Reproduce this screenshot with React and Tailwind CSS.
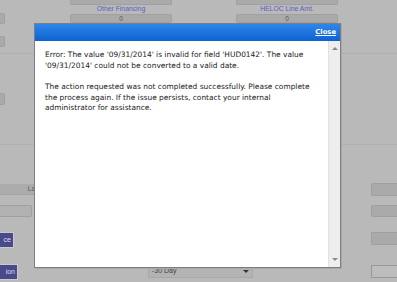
import React from "react"

const Box = ({ className = "", children }) => (
    <div className={`bg-[#aaaaaa] border border-[#a0a0a0] rounded-[2px] flex items-center justify-center text-[6.5px] text-[#555] ${className}`}>
        {children}
    </div>
)

const ErrorDialog = () => {
    return (
        <div className="absolute left-[34px] top-[23px] w-[307px] h-[245px] border border-[#7e7e7e] bg-white flex flex-col shadow-[1px_1px_0_#a9a9a9]">
            <div className="h-[17px] bg-gradient-to-b from-[#2f86ea] to-[#0b62d2] flex items-center justify-end pr-[4px]">
                <a className="text-white font-bold underline text-[6.8px] font-['DejaVu_Sans',sans-serif] cursor-pointer">Close</a>
            </div>
            <div className="flex-1 flex min-h-0">
                <div className="flex-1 pl-[10px] pr-[7px] pt-[9px] text-[7.45px] leading-[10.5px] text-[#222] font-['DejaVu_Sans',sans-serif]">
                    <p>Error: The value '09/31/2014' is invalid for field 'HUD0142'. The value '09/31/2014' could not be converted to a valid date.</p>
                    <p className="mt-[11px]">The action requested was not completed successfully. Please complete the process again. If the issue persists, contact your internal administrator for assistance.</p>
                </div>
                <div className="w-[12px] bg-[#eeeeee] border-l border-[#e2e2e2] flex flex-col items-center justify-between py-[6px]">
                    <div className="w-0 h-0 border-l-[3px] border-r-[3px] border-b-[3px] border-l-transparent border-r-transparent border-b-[#8a8a8a]" />
                    <div className="w-0 h-0 border-l-[3px] border-r-[3px] border-t-[3px] border-l-transparent border-r-transparent border-t-[#8a8a8a]" />
                </div>
            </div>
        </div>
    )
}

const App = () => {
    return (
        <div className="relative w-[397px] h-[282px] overflow-hidden bg-[#b9b9b9] font-['Liberation_Sans',sans-serif]">
            {/* greyed page underneath */}
            <div className="flex flex-col">
                <div className="flex h-[5px]">
                    <div className="w-[70px]" />
                    <Box className="w-[102px] h-[5px] border-t-0 rounded-t-none" />
                    <div className="w-[64px]" />
                    <Box className="w-[102px] h-[5px] border-t-0 rounded-t-none" />
                </div>
                <div className="flex h-[8px] items-center text-[6.8px] text-[#5d5dc2]">
                    <div className="w-[70px]" />
                    <div className="w-[102px] text-center">Other Financing</div>
                    <div className="w-[64px]" />
                    <div className="w-[102px] text-center">HELOC Line Amt.</div>
                </div>
                <div className="flex h-[11px] items-start">
                    <Box className="w-[5px] h-[11px] border-l-0 rounded-l-none" />
                    <div className="w-[65px]" />
                    <Box className="w-[102px] h-[9px] mt-[1px]">0</Box>
                    <div className="w-[64px]" />
                    <Box className="w-[102px] h-[9px] mt-[1px]">0</Box>
                </div>
                <Box className="w-[5px] h-[11px] mt-[12px] border-l-0 rounded-l-none" />
                <div className="h-px bg-[#b0b0b0] mt-[6px]" />
                <Box className="w-[5px] h-[12px] mt-[39px] border-l-0 rounded-l-none" />
                <div className="h-px bg-[#b0b0b0] mt-[39px]" />
                <div className="flex justify-between items-start mt-[38px] h-[13px]">
                    <div className="w-[35px] h-[11px] mt-[1px] bg-[#acacac] border-b border-[#a3a3a3] flex items-center justify-end text-[6.5px] text-[#555]">La</div>
                    <Box className="w-[26px] h-[13px] border-r-0 rounded-r-none" />
                </div>
                <div className="flex justify-between items-start mt-[9px] h-[12px]">
                    <Box className="w-[32px] h-[12px] border-l-0 rounded-l-none bg-[#b1b1b1]" />
                    <Box className="w-[26px] h-[12px] border-r-0 rounded-r-none" />
                </div>
                <div className="flex justify-between items-start mt-[15px] h-[16px]">
                    <div className="w-[14px] h-[16px] bg-[#4a4a8a] border border-[#c8c8d8] border-l-0 flex items-center justify-end pr-[2px] text-[7px] text-[#dcdcec]">ce</div>
                    <Box className="w-[26px] h-[13px] border-r-0 rounded-r-none" />
                </div>
                <div className="flex items-start mt-[16px] h-[16px]">
                    <div className="w-[18px] h-[16px] bg-[#4a4a8a] border border-[#c8c8d8] border-l-0 flex items-center justify-end pr-[2px] text-[7px] text-[#dcdcec]">ion</div>
                    <div className="w-[130px]" />
                    <div className="w-[105px] h-[13px] mt-[1px] bg-[#b3b3b3] border border-[#a8a8a8] flex items-center justify-between px-[3px] text-[7px] text-[#444]">
                        <span>-30 Day</span>
                        <div className="w-0 h-0 border-l-[3px] border-r-[3px] border-t-[3px] border-l-transparent border-r-transparent border-t-[#333]" />
                    </div>
                    <div className="flex-1" />
                    <div className="w-[26px] h-[13px] mt-[1px] bg-[#bdbdbd] border border-[#999] border-r-0" />
                </div>
            </div>

            <ErrorDialog />
        </div>
    )
}

export default App
